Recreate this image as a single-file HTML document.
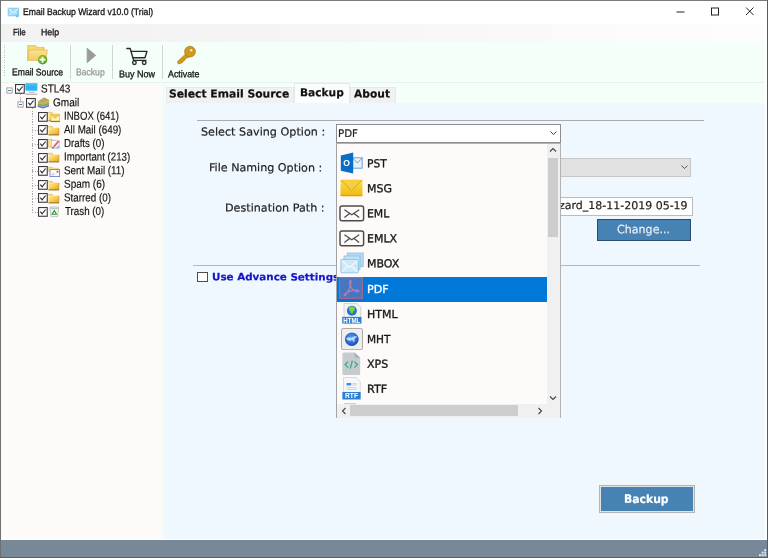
<!DOCTYPE html>
<html>
<head>
<meta charset="utf-8">
<title>Email Backup Wizard v10.0 (Trial)</title>
<style>
html,body{margin:0;padding:0;}
body{width:768px;height:558px;overflow:hidden;background:#fff;font-family:"Liberation Sans",sans-serif;}
#win{position:absolute;left:0;top:0;width:768px;height:558px;background:#fff;overflow:hidden;filter:blur(0.35px);}
.abs{position:absolute;}
.t{position:absolute;white-space:nowrap;line-height:1;transform-origin:0 50%;}
.ui{font-family:"Liberation Sans",sans-serif;color:#141414;-webkit-text-stroke:0.3px currentColor;}
.vd{font-family:"DejaVu Sans","Liberation Sans",sans-serif;color:#222;-webkit-text-stroke:0.2px currentColor;}
/* frame */
#bt{left:0;top:0;width:768px;height:1px;background:#7a7a7a;}
#bl{left:0;top:0;width:1px;height:558px;background:#707070;}
#br{left:767px;top:0;width:1px;height:558px;background:#5a5a5a;}
#bb{left:0;top:557px;width:768px;height:1px;background:#55606b;}
#title{left:1px;top:1px;width:766px;height:22.5px;background:#fff;}
#menu{left:1px;top:23.5px;width:766px;height:18.2px;background:linear-gradient(to right,#f2f2f2 0%,#f5f5f5 40%,#fbfbfb 80%,#fdfdfd 100%);}
#tool{left:1px;top:41.7px;width:766px;height:41.3px;background:#f5fffa;}
#tabstrip{left:1px;top:83px;width:766px;height:20px;background:#f5fffa;}
#tree{left:1px;top:83px;width:161.2px;height:455.6px;background:#fffafa;}
#split{left:162.2px;top:83px;width:2.4px;height:455.6px;background:#f4faf8;}
#panel{left:164.6px;top:102.6px;width:600.1px;height:436px;background:#f0f8ff;}
#pw{left:1px;top:102.6px;width:766px;height:438.2px;background:#fdfefe;}
.tr{font-family:"Liberation Sans",sans-serif;font-size:11.5px;color:#111;-webkit-text-stroke:0.15px currentColor;}
.li{font-size:11px;color:#161616;-webkit-text-stroke:0.32px currentColor;}
#status{left:1px;top:540.4px;width:766px;height:16.8px;background:#778899;}
</style>
</head>
<body>
<div id="win">
  <div class="abs" id="title"></div>
  <div class="abs" id="menu"></div>
  <div class="abs" id="tool"></div>
  <div class="abs" id="tabstrip"></div>
  <div class="abs" style="left:1px;top:82.4px;width:766px;height:0.8px;background:#e9f2ee;"></div>
  <div class="abs" style="left:765.2px;top:1px;width:1.8px;height:540px;background:#fff;"></div>
  <div class="abs" id="pw"></div>
  <div class="abs" id="tree"></div>
  <div class="abs" id="split"></div>
  <div class="abs" id="panel"></div>
  <div class="abs" id="status"></div>

  <!-- TITLE -->
  <svg class="abs" id="appico" style="left:6.5px;top:6.5px" width="14" height="12" viewBox="0 0 14 12">
    <rect x="1.2" y="1.2" width="10.4" height="7.6" fill="#a9ddf7" stroke="#74c7f0" stroke-width="0.9"/>
    <path d="M1.6 1.6 L6.4 5.8 L11.2 1.6" fill="none" stroke="#eef9fe" stroke-width="1"/>
    <path d="M1.6 8.4 L5 5 M11.2 8.4 L7.8 5" fill="none" stroke="#e2f4fd" stroke-width="0.8"/>
    <path d="M10.2 6.4 v3.6 M8.7 8.6 l1.5 1.6 l1.5 -1.6" fill="none" stroke="#5bbcef" stroke-width="1"/>
  </svg>
  <div class="t ui" id="ttl" style="left:23.1px;top:6px;font-size:9.6px;transform:translateY(0.95px) rotate(0.06deg) scaleX(0.900);">Email Backup Wizard v10.0 (Trial)</div>
  <svg class="abs" style="left:670px;top:1px" width="96" height="22" viewBox="0 0 96 22">
    <path d="M6.5 11 h8" stroke="#222" stroke-width="1" fill="none"/>
    <rect x="41.5" y="7" width="7" height="7" stroke="#222" stroke-width="1" fill="none"/>
    <path d="M76 6.5 l7.5 7.5 M83.5 6.5 l-7.5 7.5" stroke="#222" stroke-width="1" fill="none"/>
  </svg>

  <!-- MENU -->
  <div class="t ui" id="mfile" style="left:12.7px;top:28px;font-size:9.2px;transform:translateY(0.28px) rotate(0.06deg) scaleX(0.864);">File</div>
  <div class="t ui" id="mhelp" style="left:40.8px;top:28px;font-size:9.2px;transform:translateY(0.28px) rotate(0.06deg) scaleX(0.957);">Help</div>

  <!-- TOOLBAR -->
  <div class="abs" id="grip" style="left:4px;top:45px;width:1px;height:32px;background:repeating-linear-gradient(to bottom,#b8c4c0 0,#b8c4c0 1px,transparent 1px,transparent 2.5px);"></div>
  <div class="abs" style="left:70px;top:45px;width:1px;height:34px;background:#cfd6d3;"></div>
  <div class="abs" style="left:112px;top:45px;width:1px;height:34px;background:#cfd6d3;"></div>
  <div class="abs" style="left:162px;top:45px;width:1px;height:34px;background:#cfd6d3;"></div>
  <div class="t ui" id="tb1" style="left:11.8px;top:67px;font-size:9.7px;transform:translateY(0.35px) rotate(0.06deg) scaleX(0.887);">Email Source</div>
  <div class="t ui" id="tb2" style="left:76.4px;top:67px;font-size:9.7px;color:#9a9a9a;transform:translateY(0.35px) rotate(0.06deg) scaleX(0.888);">Backup</div>
  <div class="t ui" id="tb3" style="left:118.9px;top:69px;font-size:9.7px;transform:translateY(0.25px) rotate(0.06deg) scaleX(0.929);">Buy Now</div>
  <div class="t ui" id="tb4" style="left:168.3px;top:69px;font-size:9.7px;transform:translateY(0.25px) rotate(0.06deg) scaleX(0.914);">Activate</div>

  <!-- TOOLBAR ICONS -->
  <svg class="abs" id="ic_src" style="left:26px;top:44px" width="24" height="22" viewBox="0 0 24 22">
    <defs><linearGradient id="gf" x1="0" y1="0" x2="0" y2="1"><stop offset="0" stop-color="#fbe38e"/><stop offset="1" stop-color="#f3cb62"/></linearGradient>
    <radialGradient id="gg" cx="0.4" cy="0.35" r="0.7"><stop offset="0" stop-color="#8fd03a"/><stop offset="1" stop-color="#4f9a17"/></radialGradient></defs>
    <path d="M1.6 1.6 h8.2 l1.6 1.8 h6.8 v3 h-14 l-1.4 10 h-1.2 z" fill="#f6d878" stroke="#e2b456" stroke-width="0.7"/>
    <path d="M1.6 16.4 l1.8 -10.4 h18 l-1.6 10.4 z" fill="url(#gf)" stroke="#e6b65a" stroke-width="0.7"/>
    <circle cx="16.6" cy="15.7" r="4.7" fill="url(#gg)"/>
    <path d="M16.6 12.7 v6 M13.6 15.7 h6" stroke="#fff" stroke-width="1.7"/>
  </svg>
  <svg class="abs" id="ic_play" style="left:86px;top:47px" width="11" height="17" viewBox="0 0 11 17">
    <path d="M1.2 1.3 L9.6 8.4 L1.2 15.6 z" fill="#9b9b9b" stroke="#9b9b9b" stroke-width="1" stroke-linejoin="round"/>
  </svg>
  <svg class="abs" id="ic_cart" style="left:125px;top:46px" width="24" height="20" viewBox="0 0 24 20">
    <g fill="none" stroke="#2a2a2a" stroke-width="1.35" stroke-linecap="round" stroke-linejoin="round">
      <path d="M1.8 2.5 h3.4 l3.4 11.8 h12.4"/>
      <path d="M6.2 5.3 h15.8 l-2 6.4 h-12"/>
      <circle cx="9.4" cy="16.7" r="1.8"/>
      <circle cx="19.2" cy="16.7" r="1.8"/>
    </g>
  </svg>
  <svg class="abs" id="ic_key" style="left:175px;top:45px" width="22" height="21" viewBox="0 0 22 21">
    <g stroke="#a9780f" stroke-width="0.7" fill="#d09a1c">
      <path d="M11.2 8.4 l3 3 l-1.6 1.6 l-1.2 -0.4 l-0.4 1.2 l-1.4 0.2 l0 1.4 l-1.4 0.2 l-0.2 1.4 l-2.6 1.6 l-2.4 0.2 l-0.3 -2.4 z"/>
      <circle cx="15" cy="6.6" r="5.4"/>
    </g>
    <circle cx="16.2" cy="5.2" r="1.5" fill="#fdf6e3" stroke="#a9780f" stroke-width="0.5"/>
  </svg>

  <!-- TABS -->
  <div class="abs" id="tab1" style="left:165.5px;top:86.5px;width:128px;height:16px;background:#f1f1f1;border:1px solid #e7eaea;border-bottom:none;box-sizing:border-box;"></div>
  <div class="abs" id="tab3" style="left:349.5px;top:86.5px;width:46.5px;height:16px;background:#f1f1f1;border:1px solid #e7eaea;border-bottom:none;box-sizing:border-box;"></div>
  <div class="abs" id="tab2" style="left:293.5px;top:83px;width:56.5px;height:20px;background:#fbfdff;border:1px solid #e7eaea;border-bottom:none;box-sizing:border-box;"></div>
  <div class="t vd" id="tt1" style="left:168.7px;top:88px;font-size:11px;font-weight:bold;color:#111;transform:translateY(0.49px) rotate(0.06deg) scaleX(0.980);">Select Email Source</div>
  <div class="t vd" id="tt2" style="left:300px;top:87px;font-size:11px;font-weight:bold;color:#111;transform:translateY(0.29px) rotate(0.06deg) scaleX(0.965);">Backup</div>
  <div class="t vd" id="tt3" style="left:353.7px;top:88px;font-size:11px;font-weight:bold;color:#111;transform:translateY(0.49px) rotate(0.06deg) scaleX(0.972);">About</div>

  <!-- FORM -->
  <div class="abs" style="left:197px;top:120px;width:507px;height:1px;background:#a9adb2;"></div>
  <div class="abs" style="left:193px;top:265px;width:507px;height:1px;background:#b4b8bc;"></div>
  <div class="t vd" id="l1" style="left:200.8px;top:126px;font-size:11px;transform:translateY(0.40px) rotate(0.06deg) scaleX(1.017);">Select Saving Option :</div>
  <div class="t vd" id="l2" style="left:209.4px;top:162px;font-size:11px;transform:translateY(0.30px) rotate(0.06deg) scaleX(1.011);">File Naming Option :</div>
  <div class="t vd" id="l3" style="left:225.4px;top:202px;font-size:11px;transform:translateY(0.50px) rotate(0.06deg) scaleX(1.016);">Destination Path :</div>

  <div class="abs" id="cb2" style="left:440px;top:158px;width:251px;height:19px;background:#e1e1e1;border:1px solid #c6c6c6;box-sizing:border-box;"></div>
  <svg class="abs" style="left:680.3px;top:164.2px" width="9" height="7" viewBox="0 0 9 7"><path d="M1.6 1.6 L4.5 4.6 L7.4 1.6" fill="none" stroke="#555" stroke-width="1"/></svg>
  <div class="abs" id="tbx" style="left:440px;top:196.5px;width:253px;height:19px;background:#fff;border:1px solid #b9bcc0;box-sizing:border-box;"></div>
  <div class="t vd" id="path" style="left:559.1px;top:200px;font-size:11px;transform:translateY(0.09px) rotate(0.06deg) scaleX(0.999);">zard_18-11-2019 05-19</div>
  <div class="abs" id="chg" style="left:597px;top:218.5px;width:94px;height:22px;background:#4682b4;border:1px solid #2d4d6e;box-sizing:border-box;"></div>
  <div class="t vd" id="chgt" style="left:616.7px;top:224px;font-size:11.5px;color:#e9eef3;transform:translateY(0.17px) rotate(0.06deg) scaleX(0.965);">Change...</div>

  <div class="abs" id="chk" style="left:197px;top:272px;width:10.5px;height:10px;background:#fff;border:1px solid #4d4d4d;box-sizing:border-box;"></div>
  <div class="t vd" id="adv" style="left:212.3px;top:272px;font-size:10px;font-weight:bold;color:#1414c8;transform:translateY(0.30px) rotate(0.06deg) scaleX(1.034);">Use Advance Settings</div>

  <div class="abs" id="bk" style="left:599.6px;top:486.1px;width:94.4px;height:25.8px;background:#4682b4;border:1.6px solid #e2e2e2;box-sizing:border-box;outline:0.8px solid #b4b4b4;outline-offset:-0.8px;"></div>
  <div class="t vd" id="bkt" style="left:624.2px;top:493px;font-size:11.5px;font-weight:bold;color:#fff;transform:translateY(0.87px) rotate(0.06deg) scaleX(0.940);">Backup</div>

  <!-- COMBO + DROPDOWN -->
  <div class="abs" id="cb1" style="left:335.6px;top:123.6px;width:225px;height:19.2px;background:#fff;border:1px solid #8e8e8e;box-sizing:border-box;"></div>
  <div class="t vd" id="cb1t" style="left:338.3px;top:128px;font-size:10.5px;transform:translateY(0.00px) rotate(0.06deg) scaleX(0.977);">PDF</div>
  <svg class="abs" style="left:549px;top:130.2px" width="9" height="7" viewBox="0 0 9 7"><path d="M1.6 1.6 L4.5 4.6 L7.4 1.6" fill="none" stroke="#444" stroke-width="1"/></svg>
  <div class="abs" id="dd" style="left:335.8px;top:142.6px;width:225px;height:275.4px;background:#fffafa;border:1px solid #b2b2b2;border-left-color:#a2a2a2;box-sizing:border-box;"></div>
  <div class="abs" id="sel" style="left:337px;top:276.5px;width:209.5px;height:25px;background:#0078d7;"></div>
  <!-- vscroll -->
  <div class="abs" style="left:546.5px;top:143.5px;width:13.5px;height:274px;background:#f0f0f0;"></div>
  <div class="abs" style="left:547.7px;top:157.5px;width:10px;height:79.5px;background:#cdcdcd;"></div>
  <svg class="abs" style="left:548.6px;top:146.8px" width="8" height="6" viewBox="0 0 8 6"><path d="M1 4.5 L4 1.5 L7 4.5" fill="none" stroke="#444" stroke-width="1.1"/></svg>
  <svg class="abs" style="left:548.5px;top:394.5px" width="8" height="6" viewBox="0 0 8 6"><path d="M1 1.5 L4 4.5 L7 1.5" fill="none" stroke="#444" stroke-width="1.1"/></svg>
  <!-- hscroll -->
  <div class="abs" style="left:337px;top:404px;width:209.5px;height:13.5px;background:#f0f0f0;"></div>
  <div class="abs" style="left:350.3px;top:405.2px;width:168px;height:10.5px;background:#cdcdcd;"></div>
  <svg class="abs" style="left:340.8px;top:406.5px" width="6" height="8" viewBox="0 0 6 8"><path d="M4.5 1 L1.5 4 L4.5 7" fill="none" stroke="#444" stroke-width="1.1"/></svg>
  <svg class="abs" style="left:537px;top:406.5px" width="6" height="8" viewBox="0 0 6 8"><path d="M1.5 1 L4.5 4 L1.5 7" fill="none" stroke="#444" stroke-width="1.1"/></svg>
  <!-- DROPDOWN ICONS -->
  <svg class="abs" id="ic_pst" style="left:340px;top:152px" width="23" height="22" viewBox="0 0 23 22">
    <rect x="12.6" y="5.8" width="9.6" height="10.4" fill="#e9eff6" stroke="#5b9bd5" stroke-width="0.9"/>
    <path d="M12.6 6 L17.4 11 L22.2 6" fill="none" stroke="#5b9bd5" stroke-width="0.9"/>
    <path d="M0.8 3.6 L13.2 0.4 L13.2 21.4 L0.8 18.8 z" fill="#0a6ec6"/>
    <text x="6.7" y="14.2" font-family="Liberation Sans, sans-serif" font-weight="bold" font-size="8.6" fill="#fff" text-anchor="middle">O</text>
  </svg>
  <svg class="abs" id="ic_msg" style="left:340px;top:179px" width="23" height="18" viewBox="0 0 23 18">
    <defs><linearGradient id="gm" x1="0" y1="0" x2="0" y2="1"><stop offset="0" stop-color="#fbe05a"/><stop offset="1" stop-color="#f1b70a"/></linearGradient></defs>
    <rect x="0.5" y="0.5" width="22" height="16.8" rx="1.6" fill="url(#gm)"/>
    <path d="M0.8 1 L11.4 11.6 L22.2 1" fill="#f7cf3c" stroke="#dca511" stroke-width="1"/>
    <path d="M0.6 16.6 h21.8" stroke="#d99e08" stroke-width="1"/>
  </svg>
  <svg class="abs" id="ic_eml" style="left:338.6px;top:205px" width="26" height="17" viewBox="0 0 26 17">
    <rect x="1" y="1" width="23.6" height="14.8" rx="2" fill="#fffafa" stroke="#4c4c4c" stroke-width="1.45"/>
    <path d="M5.4 4.8 L12.8 9.8 L20.2 4.8 M5.4 12.6 L10.6 8.4 M20.2 12.6 L15 8.4" fill="none" stroke="#4c4c4c" stroke-width="1.25"/>
  </svg>
  <svg class="abs" id="ic_emlx" style="left:338.6px;top:230px" width="26" height="17" viewBox="0 0 26 17">
    <rect x="1" y="1" width="23.6" height="14.8" rx="2" fill="#fffafa" stroke="#4c4c4c" stroke-width="1.45"/>
    <path d="M5.4 4.8 L12.8 9.8 L20.2 4.8 M5.4 12.6 L10.6 8.4 M20.2 12.6 L15 8.4" fill="none" stroke="#4c4c4c" stroke-width="1.25"/>
  </svg>
  <svg class="abs" id="ic_mbox" style="left:339.6px;top:252px" width="24" height="22" viewBox="0 0 24 22">
    <g stroke="#86bfe4" stroke-width="0.8"><rect x="7.2" y="1" width="16" height="13.4" fill="#b7daf2"/><rect x="4" y="4" width="16" height="13.4" fill="#c3e1f5"/>
    <rect x="0.8" y="7.4" width="17.6" height="13.4" rx="0.8" fill="#cfe8f8"/></g>
    <path d="M2 9 L9.6 15.4 L17.2 9 M2 19.6 L7.6 14 M17.2 19.6 L11.6 14" fill="none" stroke="#f2f9fd" stroke-width="1.1"/>
  </svg>
  <svg class="abs" id="ic_pdf" style="left:339.3px;top:277px" width="24" height="22" viewBox="0 0 24 22">
    <rect x="0.6" y="0.6" width="22.8" height="20.8" fill="#4876c4" stroke="#a5688e" stroke-width="1.1"/>
    <path d="M11.6 3.4 c-1.6 0 -1.2 3.4 0.2 6.4 c1.6 3.4 5 5.4 7.6 4.8 c1.4 -0.4 0 -1.8 -2.8 -1.6 c-3.6 0.2 -8.2 2 -10.6 4 c-1.8 1.6 -0.6 2.4 0.6 1 c1.8 -2 4 -6 4.8 -9.400000000000001 c0.6 -2.8 0.8 -5.2 0.2 -5.2 z" fill="none" stroke="#a883b2" stroke-width="1.3"/>
  </svg>
  <svg class="abs" id="ic_html" style="left:341.6px;top:303px" width="20" height="21" viewBox="0 0 20 21">
    <path d="M2 0.6 h13 l3.8 3.4 v16.4 h-16.8 z" fill="#f1f3f5" stroke="#c2c6cb" stroke-width="0.7"/>
    <circle cx="9.9" cy="7.7" r="5" fill="#2178d2"/><path d="M7.4 4 c2.2 -1.6 5.4 -0.8 5.6 1.6 c0.2 2 -1.8 1.8 -2 3.6 c-0.2 1.6 -1.8 1.6 -2.4 0 c-0.6 -1.8 -2.6 -2.6 -1.2 -5.2 z" fill="#7ed233"/>
    <rect x="0.2" y="13.9" width="19.2" height="6.6" fill="#2a7fd4"/>
    <text x="9.8" y="19.5" font-family="Liberation Sans, sans-serif" font-weight="bold" font-size="6.3" fill="#fff" text-anchor="middle" textLength="17" lengthAdjust="spacingAndGlyphs">HTML</text>
  </svg>
  <svg class="abs" id="ic_mht" style="left:341px;top:327.5px" width="22" height="22" viewBox="0 0 22 22">
    <rect x="0.5" y="0.5" width="21" height="21.2" rx="1.6" fill="#eeeeee" stroke="#a2a2a2" stroke-width="0.9"/>
    <defs><radialGradient id="gl" cx="0.45" cy="0.4" r="0.7"><stop offset="0" stop-color="#5aa4f2"/><stop offset="0.7" stop-color="#1f5cc6"/><stop offset="1" stop-color="#17409a"/></radialGradient></defs>
    <circle cx="10.8" cy="11.2" r="6.8" fill="url(#gl)"/>
    <path d="M5 10.4 c2 -1.6 4 -1.4 5.6 -0.4 c1.6 -1.6 4 -2.2 6.2 -1 c-1.4 0.2 -2.6 1 -3.6 2.200000000000001 c1 1.2 0.6 2.6 -0.8 3.2 c0.2 -1.2 -0.4 -2 -1.6 -2.4 c-1.6 1.2 -3.8 1 -5.8 -1.6 z" fill="#cfe5fb" opacity="0.85"/>
  </svg>
  <svg class="abs" id="ic_xps" style="left:342.4px;top:352.2px" width="19" height="24" viewBox="0 0 19 24">
    <path d="M2 0.4 h10.6 l5.6 5.4 v15.6 a1.6 1.6 0 0 1 -1.6 1.6 h-14.6 a1.6 1.6 0 0 1 -1.6 -1.6 v-19.4 a1.6 1.6 0 0 1 1.6 -1.6 z" fill="#c5cbce"/>
    <path d="M12.6 0.4 v4 a1.4 1.4 0 0 0 1.4 1.4 h4.2 z" fill="#a9b2b6"/>
    <path d="M6.2 9.6 L3.2 12.6 L6.2 15.6 M12.4 9.6 L15.4 12.6 L12.4 15.6 M10.4 8.6 L8.2 16.6" fill="none" stroke="#35a88a" stroke-width="1.3"/>
  </svg>
  <svg class="abs" id="ic_rtf" style="left:342px;top:377.2px" width="19" height="23" viewBox="0 0 19 23">
    <path d="M1.4 0.5 h12.6 l4.2 4 v17.6 h-16.8 z" fill="#f6f7f9" stroke="#c9cdd2" stroke-width="0.7"/>
    <rect x="4.6" y="6" width="4.6" height="2.4" fill="#3a8be0"/><path d="M10.4 6.6 h4.4 M10.4 8 h4.4 M4.6 10.6 h10.2 M4.6 12.4 h10.2" stroke="#c3c9d0" stroke-width="0.8"/>
    <rect x="0.4" y="15" width="18.2" height="7.4" fill="#2a7fd4"/>
    <text x="9.5" y="21.2" font-family="Liberation Sans, sans-serif" font-weight="bold" font-size="6.6" fill="#fff" text-anchor="middle" textLength="13" lengthAdjust="spacingAndGlyphs">RTF</text>
  </svg>
  <svg class="abs" id="ic_next" style="left:343.6px;top:402.6px" width="14" height="2" viewBox="0 0 14 2"><path d="M0 0.6 h12" stroke="#c4c8cc" stroke-width="1"/></svg>

  <!-- items text -->
  <div class="t vd li" id="i1" style="left:366.9px;top:158px;transform:translateY(0.19px) rotate(0.06deg) scaleX(0.973);">PST</div>
  <div class="t vd li" id="i2" style="left:366.9px;top:183px;transform:translateY(0.19px) rotate(0.06deg) scaleX(0.996);">MSG</div>
  <div class="t vd li" id="i3" style="left:366.9px;top:208px;transform:translateY(0.29px) rotate(0.06deg) scaleX(0.988);">EML</div>
  <div class="t vd li" id="i4" style="left:366.9px;top:233px;transform:translateY(0.29px) rotate(0.06deg) scaleX(1.000);">EMLX</div>
  <div class="t vd li" id="i5" style="left:366.9px;top:258px;transform:translateY(0.29px) rotate(0.06deg) scaleX(1.000);">MBOX</div>
  <div class="t vd li" id="i6" style="left:366.9px;top:283px;color:#fff;transform:translateY(0.99px) rotate(0.06deg) scaleX(1.012);">PDF</div>
  <div class="t vd li" id="i7" style="left:366.9px;top:308px;transform:translateY(0.99px) rotate(0.06deg) scaleX(0.996);">HTML</div>
  <div class="t vd li" id="i8" style="left:366.9px;top:333px;transform:translateY(0.99px) rotate(0.06deg) scaleX(0.960);">MHT</div>
  <div class="t vd li" id="i9" style="left:366.9px;top:358px;transform:translateY(0.79px) rotate(0.06deg) scaleX(1.000);">XPS</div>
  <div class="t vd li" id="i10" style="left:366.9px;top:383px;transform:translateY(0.79px) rotate(0.06deg) scaleX(1.018);">RTF</div>

  <!-- TREE -->
  <div class="abs" style="left:20.2px;top:94px;width:0.9px;height:7px;background:repeating-linear-gradient(to bottom,#a9a9a9 0,#a9a9a9 0.8px,transparent 0.8px,transparent 1.6px);"></div>
  <div class="abs" style="left:31.8px;top:108px;width:0.9px;height:104.5px;background:repeating-linear-gradient(to bottom,#a9a9a9 0,#a9a9a9 0.8px,transparent 0.8px,transparent 1.6px);"></div>
  <div class="abs" style="left:11.5px;top:89.8px;width:4px;height:0.9px;background:repeating-linear-gradient(to right,#a9a9a9 0,#a9a9a9 0.8px,transparent 0.8px,transparent 1.6px);"></div>
  <div class="abs" style="left:23px;top:103.5px;width:3.5px;height:0.9px;background:repeating-linear-gradient(to right,#a9a9a9 0,#a9a9a9 0.8px,transparent 0.8px,transparent 1.6px);"></div>
  <div class="abs" style="left:31.8px;top:116.5px;width:6px;height:0.9px;background:repeating-linear-gradient(to right,#a9a9a9 0,#a9a9a9 0.8px,transparent 0.8px,transparent 1.6px);"></div>
  <div class="abs" style="left:31.8px;top:130.2px;width:6px;height:0.9px;background:repeating-linear-gradient(to right,#a9a9a9 0,#a9a9a9 0.8px,transparent 0.8px,transparent 1.6px);"></div>
  <div class="abs" style="left:31.8px;top:143.8px;width:6px;height:0.9px;background:repeating-linear-gradient(to right,#a9a9a9 0,#a9a9a9 0.8px,transparent 0.8px,transparent 1.6px);"></div>
  <div class="abs" style="left:31.8px;top:157.5px;width:6px;height:0.9px;background:repeating-linear-gradient(to right,#a9a9a9 0,#a9a9a9 0.8px,transparent 0.8px,transparent 1.6px);"></div>
  <div class="abs" style="left:31.8px;top:171.1px;width:6px;height:0.9px;background:repeating-linear-gradient(to right,#a9a9a9 0,#a9a9a9 0.8px,transparent 0.8px,transparent 1.6px);"></div>
  <div class="abs" style="left:31.8px;top:184.8px;width:6px;height:0.9px;background:repeating-linear-gradient(to right,#a9a9a9 0,#a9a9a9 0.8px,transparent 0.8px,transparent 1.6px);"></div>
  <div class="abs" style="left:31.8px;top:198.4px;width:6px;height:0.9px;background:repeating-linear-gradient(to right,#a9a9a9 0,#a9a9a9 0.8px,transparent 0.8px,transparent 1.6px);"></div>
  <div class="abs" style="left:31.8px;top:212.1px;width:6px;height:0.9px;background:repeating-linear-gradient(to right,#a9a9a9 0,#a9a9a9 0.8px,transparent 0.8px,transparent 1.6px);"></div>
  <svg class="abs" style="left:5.6px;top:86.7px" width="7" height="7" viewBox="0 0 7 7"><rect x="0.9" y="0.9" width="5.2" height="5.2" fill="#fff" stroke="#8c8c8c" stroke-width="0.8"/><path d="M2 3.5 h3" stroke="#3a6ea5" stroke-width="0.9"/></svg>
  <svg class="abs" style="left:16.9px;top:101.0px" width="7" height="7" viewBox="0 0 7 7"><rect x="0.9" y="0.9" width="5.2" height="5.2" fill="#fff" stroke="#8c8c8c" stroke-width="0.8"/><path d="M2 3.5 h3" stroke="#3a6ea5" stroke-width="0.9"/></svg>
  <svg class="abs" style="left:15.1px;top:84.25px" width="10" height="10" viewBox="0 0 10 10"><rect x="0.55" y="0.55" width="8.7" height="8.7" fill="#fff" stroke="#3a3a3a" stroke-width="1.1"/><path d="M2.3 4.7 L4.1 6.8 L7.6 2.5" fill="none" stroke="#2a2a2a" stroke-width="1.15"/></svg>
  <div class="t tr" id="tr0" style="left:41.3px;top:83px;transform:translateY(0.57px) rotate(0.06deg) scaleX(0.867);">STL43</div>
  <svg class="abs" style="left:26.3px;top:97.90px" width="10" height="10" viewBox="0 0 10 10"><rect x="0.55" y="0.55" width="8.7" height="8.7" fill="#fff" stroke="#3a3a3a" stroke-width="1.1"/><path d="M2.3 4.7 L4.1 6.8 L7.6 2.5" fill="none" stroke="#2a2a2a" stroke-width="1.15"/></svg>
  <div class="t tr" id="tr1" style="left:52.6px;top:97px;transform:translateY(0.17px) rotate(0.06deg) scaleX(0.876);">Gmail</div>
  <svg class="abs" style="left:38.1px;top:111.55px" width="10" height="10" viewBox="0 0 10 10"><rect x="0.55" y="0.55" width="8.7" height="8.7" fill="#fff" stroke="#3a3a3a" stroke-width="1.1"/><path d="M2.3 4.7 L4.1 6.8 L7.6 2.5" fill="none" stroke="#2a2a2a" stroke-width="1.15"/></svg>
  <div class="t tr" id="tr2" style="left:63.8px;top:110px;transform:translateY(0.77px) rotate(0.06deg) scaleX(0.834);">INBOX (641)</div>
  <svg class="abs" style="left:38.1px;top:125.20px" width="10" height="10" viewBox="0 0 10 10"><rect x="0.55" y="0.55" width="8.7" height="8.7" fill="#fff" stroke="#3a3a3a" stroke-width="1.1"/><path d="M2.3 4.7 L4.1 6.8 L7.6 2.5" fill="none" stroke="#2a2a2a" stroke-width="1.15"/></svg>
  <div class="t tr" id="tr3" style="left:63.8px;top:124px;transform:translateY(0.37px) rotate(0.06deg) scaleX(0.855);">All Mail (649)</div>
  <svg class="abs" style="left:38.1px;top:138.85px" width="10" height="10" viewBox="0 0 10 10"><rect x="0.55" y="0.55" width="8.7" height="8.7" fill="#fff" stroke="#3a3a3a" stroke-width="1.1"/><path d="M2.3 4.7 L4.1 6.8 L7.6 2.5" fill="none" stroke="#2a2a2a" stroke-width="1.15"/></svg>
  <div class="t tr" id="tr4" style="left:63.8px;top:137px;transform:translateY(0.97px) rotate(0.06deg) scaleX(0.845);">Drafts (0)</div>
  <svg class="abs" style="left:38.1px;top:152.50px" width="10" height="10" viewBox="0 0 10 10"><rect x="0.55" y="0.55" width="8.7" height="8.7" fill="#fff" stroke="#3a3a3a" stroke-width="1.1"/><path d="M2.3 4.7 L4.1 6.8 L7.6 2.5" fill="none" stroke="#2a2a2a" stroke-width="1.15"/></svg>
  <div class="t tr" id="tr5" style="left:63.8px;top:151px;transform:translateY(0.57px) rotate(0.06deg) scaleX(0.841);">Important (213)</div>
  <svg class="abs" style="left:38.1px;top:166.15px" width="10" height="10" viewBox="0 0 10 10"><rect x="0.55" y="0.55" width="8.7" height="8.7" fill="#fff" stroke="#3a3a3a" stroke-width="1.1"/><path d="M2.3 4.7 L4.1 6.8 L7.6 2.5" fill="none" stroke="#2a2a2a" stroke-width="1.15"/></svg>
  <div class="t tr" id="tr6" style="left:63.8px;top:165px;transform:translateY(0.17px) rotate(0.06deg) scaleX(0.857);">Sent Mail (11)</div>
  <svg class="abs" style="left:38.1px;top:179.80px" width="10" height="10" viewBox="0 0 10 10"><rect x="0.55" y="0.55" width="8.7" height="8.7" fill="#fff" stroke="#3a3a3a" stroke-width="1.1"/><path d="M2.3 4.7 L4.1 6.8 L7.6 2.5" fill="none" stroke="#2a2a2a" stroke-width="1.15"/></svg>
  <div class="t tr" id="tr7" style="left:63.8px;top:178px;transform:translateY(0.77px) rotate(0.06deg) scaleX(0.867);">Spam (6)</div>
  <svg class="abs" style="left:38.1px;top:193.45px" width="10" height="10" viewBox="0 0 10 10"><rect x="0.55" y="0.55" width="8.7" height="8.7" fill="#fff" stroke="#3a3a3a" stroke-width="1.1"/><path d="M2.3 4.7 L4.1 6.8 L7.6 2.5" fill="none" stroke="#2a2a2a" stroke-width="1.15"/></svg>
  <div class="t tr" id="tr8" style="left:63.8px;top:192px;transform:translateY(0.37px) rotate(0.06deg) scaleX(0.855);">Starred (0)</div>
  <svg class="abs" style="left:38.1px;top:207.10px" width="10" height="10" viewBox="0 0 10 10"><rect x="0.55" y="0.55" width="8.7" height="8.7" fill="#fff" stroke="#3a3a3a" stroke-width="1.1"/><path d="M2.3 4.7 L4.1 6.8 L7.6 2.5" fill="none" stroke="#2a2a2a" stroke-width="1.15"/></svg>
  <div class="t tr" id="tr9" style="left:65.0px;top:205px;transform:translateY(0.97px) rotate(0.06deg) scaleX(0.850);">Trash (0)</div>

  <!-- TREE ICONS -->
  <svg class="abs" width="0" height="0" style="left:0;top:0"><defs>
    <linearGradient id="fy" x1="0" y1="0" x2="1" y2="1"><stop offset="0" stop-color="#fff0a0"/><stop offset="0.6" stop-color="#f6c544"/><stop offset="1" stop-color="#e2a21c"/></linearGradient>
    
  </defs></svg>
  <svg class="abs" style="left:24.6px;top:82.8px" width="13" height="12" viewBox="0 0 13 12"><rect x="0.5" y="0.4" width="11.8" height="7.3" fill="#2db4f2"/><rect x="0.5" y="0.4" width="11.8" height="2.2" fill="#45c0f6"/><path d="M4 9.2 h5.4" stroke="#9aa0a6" stroke-width="0.8"/><path d="M0.5 11.2 h11.8" stroke="#8d949c" stroke-width="0.9"/></svg>
  <svg class="abs" style="left:37px;top:97px" width="13" height="12" viewBox="0 0 13 12"><path d="M0.6 8.2 L6.4 5.6 L12 8 L12 9.6 L6 11.6 L0.6 9.8 z" fill="#5a74c4"/><path d="M0.6 8.2 L6.4 5.6 L12 8 L6 10.2 z" fill="#a9b9e6"/><path d="M0.8 6.4 L6.6 3.6 L12 6 L12 7.4 L6 9.6 L0.8 7.8 z" fill="#6fb05a"/><path d="M1 4.6 L7 1.8 L12.2 4.2 L12.2 5.8 L6.2 8 L1 6.2 z" fill="#e9a63a"/><path d="M1 4.4 L7 0.6 L12.2 3 L12.2 4.2 L6.2 6.6 L1 5 z" fill="#c2b57c"/><path d="M1 4.4 L7 0.6 L12.2 3 L6.2 5.4 z" fill="#b5a86c"/></svg>
  <svg class="abs" style="left:48.3px;top:110.7px" width="13" height="12" viewBox="0 0 13 12"><path d="M0.6 1.2 h3.6 l1 1.2 h-4.6 z" fill="#f3d98a" stroke="#c9a548" stroke-width="0.4"/><path d="M0.5 2.6 h10.4 v7.2 h-10.4 z" fill="url(#fy)"/><path d="M0.5 9.9 h10.5" stroke="#7a5a12" stroke-width="0.9"/><path d="M10.9 3 v7" stroke="#b88a22" stroke-width="0.6"/><rect x="3" y="3.4" width="8.6" height="6.6" fill="#fff3a8" stroke="#d9a93a" stroke-width="0.5"/><path d="M3 3.6 l4.3 3.4 l4.3 -3.4" fill="#f7c95a" stroke="#d28f1e" stroke-width="0.5"/><path d="M3 10.6 h9" stroke="#7a5a12" stroke-width="0.8"/></svg>
  <svg class="abs" style="left:48.3px;top:125.0px" width="12" height="11" viewBox="0 0 12 11"><path d="M0.6 1.2 h3.6 l1 1.2 h-4.6 z" fill="#f3d98a" stroke="#c9a548" stroke-width="0.4"/><path d="M0.5 2.6 h10.4 v7.2 h-10.4 z" fill="url(#fy)"/><path d="M0.5 9.9 h10.5" stroke="#7a5a12" stroke-width="0.9"/><path d="M10.9 3 v7" stroke="#b88a22" stroke-width="0.6"/></svg>
  <svg class="abs" style="left:48.3px;top:138.2px" width="13" height="12" viewBox="0 0 13 12"><path d="M0.6 1 h3.6 l1 1.2 h3 v7 h-7.6 z" fill="#f7e08c" stroke="#c9a548" stroke-width="0.4"/><rect x="3.4" y="2.6" width="8" height="8" fill="#fdfdfd" stroke="#9db0cc" stroke-width="0.5"/><path d="M7 10.4 h4.2 v-4 z" fill="#8fc8f4"/><path d="M4.6 8.8 L10 2.6 L11.4 3.8 L6 10 l-1.8 0.6 z" fill="#e45d6a"/><path d="M4.6 8.8 L6 10 l-1.8 0.6 z" fill="#6a8a2a"/><path d="M5.2 8.2 L6.6 9.4" stroke="#f2d04a" stroke-width="0.9"/></svg>
  <svg class="abs" style="left:48.3px;top:152.2px" width="12" height="11" viewBox="0 0 12 11"><path d="M0.6 1.2 h3.6 l1 1.2 h-4.6 z" fill="#f3d98a" stroke="#c9a548" stroke-width="0.4"/><path d="M0.5 2.6 h10.4 v7.2 h-10.4 z" fill="url(#fy)"/><path d="M0.5 9.9 h10.5" stroke="#7a5a12" stroke-width="0.9"/><path d="M10.9 3 v7" stroke="#b88a22" stroke-width="0.6"/></svg>
  <svg class="abs" style="left:48.3px;top:165.7px" width="13" height="12" viewBox="0 0 13 12"><path d="M0.6 1 h3.6 l1 1.2 h5 v3 h-9.6 z" fill="#f7e08c" stroke="#c9a548" stroke-width="0.4"/><rect x="2" y="3.6" width="9.6" height="7" fill="#fbfcff" stroke="#5878c0" stroke-width="0.8"/><rect x="8.6" y="4.8" width="1.8" height="1.8" fill="#e23b3b"/><path d="M3.6 8 h3.6 M3.6 9 h2.4" stroke="#8aa0d0" stroke-width="0.5"/></svg>
  <svg class="abs" style="left:48.3px;top:179.5px" width="12" height="11" viewBox="0 0 12 11"><path d="M0.6 1.2 h3.6 l1 1.2 h-4.6 z" fill="#f3d98a" stroke="#c9a548" stroke-width="0.4"/><path d="M0.5 2.6 h10.4 v7.2 h-10.4 z" fill="url(#fy)"/><path d="M0.5 9.9 h10.5" stroke="#7a5a12" stroke-width="0.9"/><path d="M10.9 3 v7" stroke="#b88a22" stroke-width="0.6"/></svg>
  <svg class="abs" style="left:48.3px;top:193.2px" width="12" height="11" viewBox="0 0 12 11"><path d="M0.6 1.2 h3.6 l1 1.2 h-4.6 z" fill="#f3d98a" stroke="#c9a548" stroke-width="0.4"/><path d="M0.5 2.6 h10.4 v7.2 h-10.4 z" fill="url(#fy)"/><path d="M0.5 9.9 h10.5" stroke="#7a5a12" stroke-width="0.9"/><path d="M10.9 3 v7" stroke="#b88a22" stroke-width="0.6"/></svg>
  <svg class="abs" style="left:48.9px;top:206.4px" width="11" height="12" viewBox="0 0 11 12"><path d="M1 1.6 h8.6 l-1 9 h-6.6 z" fill="#f4f6f6" stroke="#9aa4a6" stroke-width="0.6"/><ellipse cx="5.3" cy="1.7" rx="4.3" ry="1" fill="#e4e9ea" stroke="#8c9698" stroke-width="0.5"/><path d="M5.3 4.6 l2.2 3.6 h-4.4 z" fill="none" stroke="#2fa035" stroke-width="1.1"/></svg>

  <!-- STATUS GRIP -->
  <svg class="abs" style="left:757px;top:547px" width="10" height="10" viewBox="0 0 10 10" fill="#dde3e9">
    <rect x="7.2" y="2" width="2" height="2"/><rect x="4.6" y="4.6" width="2" height="2"/><rect x="7.2" y="4.6" width="2" height="2"/>
    <rect x="2" y="7.2" width="2" height="2"/><rect x="4.6" y="7.2" width="2" height="2"/><rect x="7.2" y="7.2" width="2" height="2"/>
  </svg>

  <!-- frame borders last -->
  <div class="abs" id="bt"></div>
  <div class="abs" id="bl"></div>
  <div class="abs" id="br"></div>
  <div class="abs" id="bb"></div>
</div>
</body>
</html>
